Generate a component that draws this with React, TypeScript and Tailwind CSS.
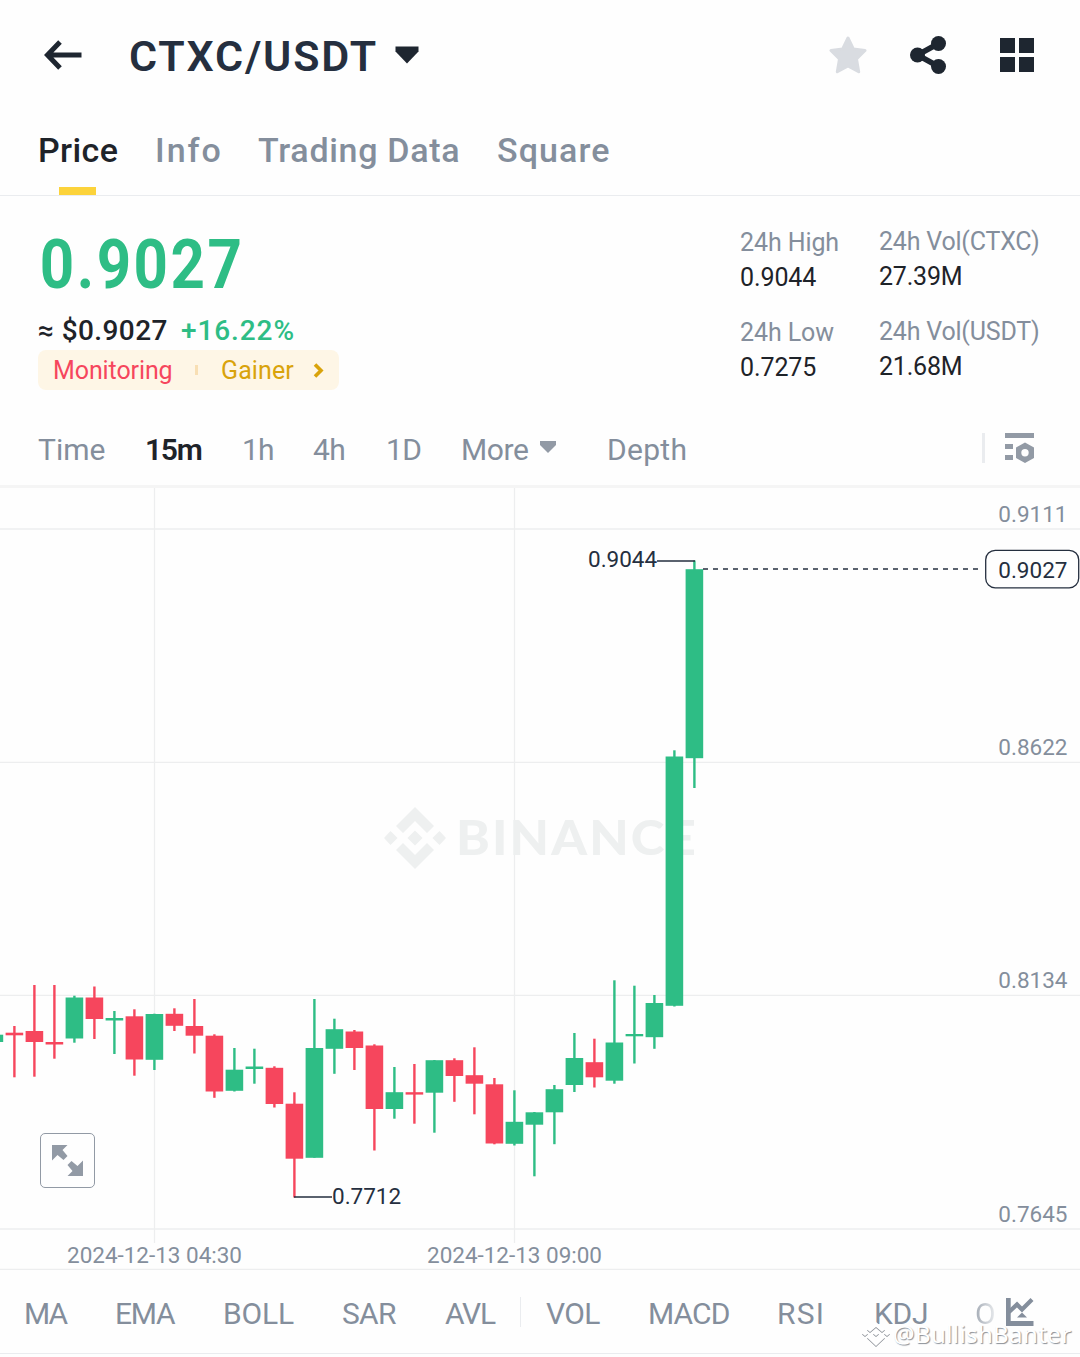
import type { ReactNode } from "react"

const GREEN = "#2EBD85"
const RED = "#F6465D"

// [x, color, high, low, bodyTop, bodyBottom]
const candles: [number, string, number, number, number, number][] = [
    [-5.6, GREEN, 1034.7, 1042, 1034.7, 1042],
    [14.4, RED, 1026, 1077.3, 1032.7, 1035.3],
    [34.4, RED, 985, 1076.7, 1031, 1042],
    [54.4, RED, 985, 1058.7, 1042, 1044.5],
    [74.4, GREEN, 995.7, 1042.7, 997.5, 1038.5],
    [94.4, RED, 986.5, 1039, 997.5, 1019],
    [114.4, GREEN, 1011, 1054, 1018, 1020.5],
    [134.4, RED, 1009.3, 1075.7, 1016.3, 1059.5],
    [154.4, GREEN, 1013.7, 1070, 1014, 1059.8],
    [174.4, RED, 1008.3, 1031, 1013.8, 1025.8],
    [194.4, RED, 999, 1053.5, 1026, 1035.7],
    [214.4, RED, 1034.3, 1097.8, 1035.7, 1091.5],
    [234.4, GREEN, 1048, 1091.5, 1069.7, 1090.8],
    [254.4, GREEN, 1048.7, 1083.7, 1066.5, 1069],
    [274.4, RED, 1066.3, 1107.5, 1067.8, 1104],
    [294.4, RED, 1092.3, 1197.5, 1103.7, 1158.7],
    [314.4, GREEN, 999, 1157.8, 1048, 1157.8],
    [334.4, GREEN, 1018.7, 1073.8, 1029.2, 1048.8],
    [354.4, RED, 1030, 1070, 1031.5, 1048],
    [374.4, RED, 1044.3, 1150.5, 1045.5, 1109],
    [394.4, GREEN, 1067, 1118.7, 1092.2, 1109],
    [414.4, RED, 1064, 1123.7, 1092.2, 1094.6],
    [434.4, GREEN, 1060, 1132.7, 1060.2, 1092.7],
    [454.4, RED, 1058.3, 1101.8, 1060.2, 1076],
    [474.4, RED, 1047.3, 1114.3, 1075.2, 1083.7],
    [494.4, RED, 1078, 1144.3, 1084.3, 1143.5],
    [514.4, GREEN, 1090.3, 1145.5, 1121.8, 1143.8],
    [534.4, GREEN, 1112, 1176.3, 1112.3, 1124.7],
    [554.4, GREEN, 1085, 1144.2, 1089.2, 1112.3],
    [574.4, GREEN, 1033, 1092, 1058, 1085],
    [594.4, RED, 1038.7, 1087.5, 1062.2, 1077.3],
    [614.4, GREEN, 980.3, 1083.7, 1042.5, 1080.7],
    [634.4, GREEN, 985.7, 1063.5, 1034, 1036.3],
    [654.4, GREEN, 995, 1048.8, 1003, 1037.2],
    [674.4, GREEN, 750.3, 1006.5, 756.5, 1005.8],
    [694.4, GREEN, 560.5, 788, 569.2, 758.2],
]

const gridLines = [
    { y: 529, label: "0.9111" },
    { y: 762.3, label: "0.8622" },
    { y: 995.4, label: "0.8134" },
    { y: 1229, label: "0.7645" },
]

const timeLines = [
    { x: 154.5, label: "2024-12-13 04:30" },
    { x: 514.5, label: "2024-12-13 09:00" },
]

function Header() {
    return (
        <header className="flex h-28 items-center pb-[3px] pl-11 pr-[46px]">
            <svg viewBox="0 0 38 30" className="mt-px h-[30px] w-[38px] shrink-0">
                <path d="M16 2 3.5 15 16 28M3 15H37.5" fill="none" stroke="#1E2630" strokeWidth="5" />
            </svg>
            <h1 className="ml-[47px] mt-[3px] w-[266px] whitespace-nowrap text-[43px] font-semibold leading-none tracking-[1.8px] text-[#252F3F]">
                CTXC/USDT
            </h1>
            <svg viewBox="0 0 24 18" className="h-[18px] w-6 shrink-0">
                <path d="M.5 .5H23.5V5.5L12 17.5 .5 5.5Z" fill="#1E2630" />
            </svg>
            <div className="ml-auto flex items-center gap-11">
                <svg viewBox="0 0 38 38" className="-mr-px mt-px h-[38px] w-[38px]">
                    <path
                        d="M19 2 24.3 13 36 14.5 27.5 23 29.7 35.8 19 30 8.3 35.8 10.5 23 2 14.5 13.7 13Z"
                        fill="#D9DCE1"
                        stroke="#D9DCE1"
                        strokeWidth="3"
                        strokeLinejoin="round"
                    />
                </svg>
                <svg viewBox="0 0 36 38" className="h-[38px] w-9">
                    <path d="M28.5 7.5 7.5 19 28.5 30.5" fill="none" stroke="#1E2630" strokeWidth="5.5" />
                    <g fill="#1E2630">
                        <circle cx="28.5" cy="7.5" r="7.5" />
                        <circle cx="7.5" cy="19" r="7.5" />
                        <circle cx="28.5" cy="30.5" r="7.5" />
                    </g>
                </svg>
                <div className="ml-2.5 grid grid-cols-2 gap-1">
                    <i className="size-[15px] bg-[#1E2630]" />
                    <i className="size-[15px] bg-[#1E2630]" />
                    <i className="size-[15px] bg-[#1E2630]" />
                    <i className="size-[15px] bg-[#1E2630]" />
                </div>
            </div>
        </header>
    )
}

function Tabs() {
    return (
        <nav className="flex h-[84px] border-b border-[#EAECEF] pl-[38px] text-[34px] font-medium leading-[76px] text-[#848E9C]">
            <div className="flex w-[117px] flex-col">
                <span className="h-[75px] tracking-[0.4px] text-[#1E2329]">Price</span>
                <span className="ml-[21px] h-2 w-[37px] bg-[#FCD33B]" />
            </div>
            <span className="w-[103px] tracking-[2px]">Info</span>
            <span className="w-[239px] tracking-[0.7px]">Trading Data</span>
            <span className="tracking-[1.1px]">Square</span>
        </nav>
    )
}

function Stat({ label, value }: { label: string; value: ReactNode }) {
    return (
        <div>
            <div className="text-[#848E9C]">{label}</div>
            <div className="text-[#1E2329]">{value}</div>
        </div>
    )
}

function PriceSummary() {
    return (
        <section className="flex h-[216px] justify-between pl-[38px]">
            <div className="flex flex-col items-start pt-[34px]">
                <div className="h-[68px] origin-left scale-x-[0.87] pl-0.5 text-[69px] font-bold leading-[70px] tracking-[2.9px] text-[#2EBD85]">
                    0.9027
                </div>
                <div className="mt-3.5 flex h-[38px] text-[28px] font-medium leading-[38px]">
                    <span className="w-[143px] tracking-[0.4px] text-[#1E2329]">≈ $0.9027</span>
                    <span className="tracking-[0.9px] text-[#2EBD85]">+16.22%</span>
                </div>
                <div className="flex h-10 w-[301px] items-center rounded-lg bg-[#FEF6E6] pl-[15px] text-[25px] leading-10">
                    <span className="w-[142px] pt-0.5 tracking-[-0.1px] text-[#F6465D]">Monitoring</span>
                    <i className="h-2.5 w-[3px] bg-[#F8DFB4]" />
                    <span className="ml-[23px] w-[92px] pt-0.5 tracking-[0.1px] text-[#D9A30B]">Gainer</span>
                    <svg viewBox="0 0 11 15" className="h-[15px] w-[11px]">
                        <path d="M2 1.5 8 7.5 2 13.5" fill="none" stroke="#D9A30B" strokeWidth="3.6" />
                    </svg>
                </div>
            </div>
            <div className="flex w-[340px] whitespace-nowrap text-[25px] leading-[35px]">
                <div className="flex w-[139px] flex-col gap-5 pt-[29px] tracking-[-0.1px]">
                    <Stat label="24h High" value="0.9044" />
                    <Stat label="24h Low" value="0.7275" />
                </div>
                <div className="flex flex-col gap-5 pt-7 tracking-[-0.2px]">
                    <Stat label="24h Vol(CTXC)" value="27.39M" />
                    <Stat label="24h Vol(USDT)" value="21.68M" />
                </div>
            </div>
        </section>
    )
}

function Intervals() {
    return (
        <nav className="flex h-[76px] items-center border-b-3 border-[#F5F5F5] pl-[38px] text-[30px] leading-[73px] text-[#848E9C]">
            <span className="w-[107px] pt-px">Time</span>
            <span className="w-[97px] pt-px font-semibold tracking-[-1.3px] text-[#1E2329]">15m</span>
            <span className="w-[71px] pt-px tracking-[-0.9px]">1h</span>
            <span className="w-[73px] pt-px tracking-[-0.5px]">4h</span>
            <span className="w-[75px] pt-px tracking-[-0.7px]">1D</span>
            <span className="w-[79px] pt-px tracking-[-0.4px]">More</span>
            <svg viewBox="0 0 16 12" className="-mt-[3px] h-3 w-4">
                <path d="M0 0H16V4L8 12 0 4Z" fill="#929AA5" />
            </svg>
            <span className="ml-[51px] pt-px tracking-[0.3px]">Depth</span>
            <i className="-mt-0.5 ml-auto h-[30px] w-[3px] bg-[#EAECEF]" />
            <svg viewBox="0 0 30 30" className="-mt-px ml-5 mr-[45px] h-[30px] w-[30px]" fill="#929AA5">
                <path d="M0 0H29V5H0ZM0 11H8V16H0ZM0 22H8V27H0Z" />
                <path
                    fillRule="evenodd"
                    d="M20 9.5 29 14.5V25L20 30 11 25V14.5ZM20 16A3.7 3.7 0 1 0 20 23.4 3.7 3.7 0 1 0 20 16Z"
                />
            </svg>
        </nav>
    )
}

function Chart() {
    return (
        <section className="relative h-[782px]">
            <svg viewBox="0 488 1080 782" className="block h-[782px] w-[1080px] font-['Roboto',sans-serif] text-[22.5px]">
                <g stroke="#EDEEEF" strokeWidth="1.3">
                    {gridLines.map((line) => (
                        <path key={line.label} d={`M0 ${line.y}H1080`} />
                    ))}
                    {timeLines.map((line) => (
                        <path key={line.label} d={`M${line.x} 488V1243`} />
                    ))}
                    <path d="M0 1269.5H1080" />
                </g>

                {/* watermark */}
                <g fill="#EEF0F0">
                    <g transform="translate(384 807)">
                        <path d="M31 0 50 19 43 26 31 14 19 26 12 19ZM31 62 50 43 43 36 31 48 19 36 12 43Z" />
                        <path d="M6.5 24 13.5 31 6.5 38 0 31ZM55.5 24 62 31 55.5 38 48.5 31ZM31 23.5 38.5 31 31 38.5 23.5 31Z" />
                    </g>
                    <text
                        x="456"
                        y="854.5"
                        textLength="242"
                        lengthAdjust="spacingAndGlyphs"
                        className="font-['Lato',sans-serif] text-[48px] font-black tracking-[2px]"
                    >
                        BINANCE
                    </text>
                </g>

                {candles.map(([x, color, high, low, top, bottom]) => (
                    <g key={x} fill={color}>
                        <rect x={x - 1.2} y={high} width="2.4" height={low - high} />
                        <rect x={x - 8.8} y={top} width="17.6" height={bottom - top} />
                    </g>
                ))}

                <g fill="#848E9C">
                    {gridLines.map((line) => (
                        <text key={line.label} x="1067.5" y={Math.floor(line.y - 7)} textAnchor="end">
                            {line.label}
                        </text>
                    ))}
                    {timeLines.map((line) => (
                        <text key={line.label} x={line.x} y="1263" textAnchor="middle" textLength="175">
                            {line.label}
                        </text>
                    ))}
                </g>

                {/* high, low and last price */}
                <g stroke="#252F3F" fill="none">
                    <path d="M657 561H695M294 1197H332" strokeWidth="1.3" />
                    <path d="M703 569H980" strokeWidth="1.5" strokeDasharray="5 5" />
                    <rect x="985.7" y="550.3" width="93" height="37.5" rx="9.5" strokeWidth="1.3" fill="#FEFEFE" />
                </g>
                <g fill="#252F3F">
                    <text x="588" y="567">0.9044</text>
                    <text x="332" y="1204">0.7712</text>
                    <text x="998.3" y="578">0.9027</text>
                </g>
            </svg>
            <button className="absolute left-10 top-[645px] flex size-[55px] items-center justify-center rounded-[5px] border-[1.5px] border-[#929AA5] bg-[#FEFEFE]">
                <svg viewBox="0 0 31 31" className="size-[31px]" fill="#929AA5">
                    <path d="M0 0H15.5L10.5 5 15.5 11 11.5 15 5.5 10 0 15.5Z" />
                    <path d="M31 31H15.5L20.5 26 15.5 20 19.5 16 25.5 21 31 15.5Z" />
                </svg>
            </button>
        </section>
    )
}

function Indicators() {
    return (
        <nav className="relative flex h-[84px] items-center border-b border-[#EAECEF] pl-6 text-[30px] leading-[83px] text-[#848E9C]">
            <span className="w-[91px] pt-1 tracking-[-2px]">MA</span>
            <span className="w-[108px] pt-1 tracking-[-1.2px]">EMA</span>
            <span className="w-[119px] pt-1 tracking-[-0.2px]">BOLL</span>
            <span className="w-[103px] pt-1 tracking-[-0.7px]">SAR</span>
            <span className="w-[75px] pt-1 tracking-[-1.2px]">AVL</span>
            <i className="h-[30px] w-px bg-[#EAECEF]" />
            <span className="ml-[25px] w-[102px] pt-1 tracking-[-0.7px]">VOL</span>
            <span className="w-[129px] pt-1 tracking-[-0.9px]">MACD</span>
            <span className="w-[97px] pt-1 tracking-[1.2px]">RSI</span>
            <span className="w-[101px] pt-1 tracking-[-0.2px]">KDJ</span>
            <span className="w-[31px] bg-linear-to-r from-[#A4ABB5] to-[#EDEFF1] to-70% bg-clip-text pt-1 text-transparent">
                O
            </span>
            <svg viewBox="0 0 28 28" className="h-7 w-7">
                <path d="M2.3 0V25.5H27.5" fill="none" stroke="#848E9C" strokeWidth="4.8" />
                <path d="M3 14 11 6.5 16 11.5 26 1.5" fill="none" stroke="#848E9C" strokeWidth="4.2" />
                <path d="M11 19.5 16 14.5 21 19.5Z" fill="#848E9C" />
            </svg>
            {/* author signature over the bar */}
            <div className="absolute left-[861px] top-[50px] flex items-center text-white">
                <svg viewBox="-1 -1 30 26" className="h-[26px] w-[30px] drop-shadow-[0.5px_1px_0.5px_#8a8f96]" fill="#FFFFFF">
                    <path d="M14 0 23 7.5 20 10 14 5 8 10 5 7.5ZM14 24 23 15.5 20 13 14 18.5 8 13 5 15.5Z" />
                    <path d="M3 9 6 11.5 3 14 0 11.5ZM25 9 28 11.5 25 14 22 11.5ZM14 9 17 11.5 14 14 11 11.5Z" />
                </svg>
                <span className="ml-0.5 font-['Noto_Sans',sans-serif] text-2xl leading-7 tracking-[0.4px] [text-shadow:1px_1px_1px_#8a8f96]">
                    @BullishBanter
                </span>
            </div>
        </nav>
    )
}

export default function App() {
    return (
        <main className="h-[1357px] w-[1080px] overflow-hidden bg-[#FEFEFE] font-['Roboto',sans-serif]">
            <Header />
            <Tabs />
            <PriceSummary />
            <Intervals />
            <Chart />
            <Indicators />
        </main>
    )
}
